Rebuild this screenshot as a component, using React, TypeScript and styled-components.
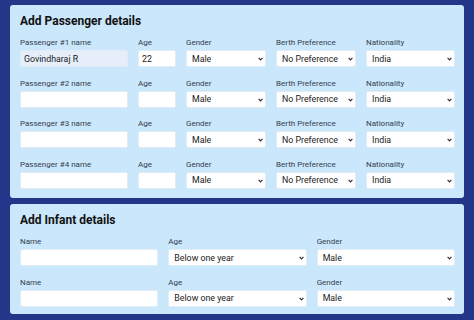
import React from "react";
import styled, { createGlobalStyle } from "styled-components";

const Global = createGlobalStyle`
  html, body { margin: 0; padding: 0; }
  body {
    background: #22368a;
    font-family: Roboto, "Liberation Sans", Arial, sans-serif;
    width: 474px;
    height: 320px;
    overflow: hidden;
  }
  * { box-sizing: border-box; }
`;

const Page = styled.div`
  display: flex;
  flex-direction: column;
  gap: 6.5px;
  padding: 5px 10px 0 10px;
`;

const Card = styled.section<{ $pb: number }>`
  background: #cbe7fb;
  border-radius: 3px;
  padding: 8px 9px ${(p) => p.$pb}px 10px;
  display: flex;
  flex-direction: column;
  gap: 8px;
`;

const Title = styled.h2`
  margin: 0;
  font-size: 12px;
  line-height: 16px;
  font-weight: 700;
  color: #111;
`;

const Rows = styled.div`
  display: flex;
  flex-direction: column;
  gap: 10.5px;
`;

const PassengerRow = styled.div`
  display: grid;
  grid-template-columns: 108px 38px 80px 80px 1fr;
  column-gap: 10px;
`;

const InfantRow = styled.div`
  display: grid;
  grid-template-columns: 1fr 1fr 1fr;
  column-gap: 10px;
`;

const Field = styled.label`
  display: flex;
  flex-direction: column;
  gap: 1px;
  min-width: 0;
`;

const Label = styled.span`
  font-size: 8px;
  line-height: 12px;
  color: #34404e;
  white-space: nowrap;
`;

const TextInput = styled.input<{ $filled?: boolean }>`
  display: block;
  margin: 0;
  height: 17px;
  width: 100%;
  border: 1px solid #e2ecf4;
  border-radius: 2px;
  background: ${(p) => (p.$filled ? "#e6eefa" : "#ffffff")};
  font-family: inherit;
  font-size: 8.8px;
  color: #222;
  padding: 0 3px;
  outline: none;
`;

const SelectWrap = styled.div`
  position: relative;
  height: 17px;
`;

const Select = styled.select`
  display: block;
  margin: 0;
  appearance: none;
  -webkit-appearance: none;
  width: 100%;
  height: 17px;
  border: 1px solid #e2ecf4;
  border-radius: 2px;
  background: #fff;
  font-family: inherit;
  font-size: 8.8px;
  color: #222;
  padding: 0 12px 0 5px;
  outline: none;
`;

const Chevron = styled.svg`
  position: absolute;
  right: 3px;
  top: 7px;
  width: 5px;
  height: 4px;
  pointer-events: none;
`;

const Dropdown: React.FC<{ value: string; options: string[] }> = ({ value, options }) => (
  <SelectWrap>
    <Select defaultValue={value}>
      {options.map((o) => (
        <option key={o}>{o}</option>
      ))}
    </Select>
    <Chevron viewBox="0 0 5 4">
      <path d="M0.6 0.8 L2.5 2.9 L4.4 0.8" fill="none" stroke="#333" strokeWidth="1.2" />
    </Chevron>
  </SelectWrap>
);

const passengers = [
  { name: "Govindharaj R", age: "22" },
  { name: "", age: "" },
  { name: "", age: "" },
  { name: "", age: "" },
];

export default function App() {
  return (
    <>
      <Global />
      <Page>
        <Card $pb={9}>
          <Title>Add Passenger details</Title>
          <Rows>
            {passengers.map((p, i) => (
              <PassengerRow key={i}>
                <Field>
                  <Label>Passenger #{i + 1} name</Label>
                  <TextInput defaultValue={p.name} $filled={!!p.name} />
                </Field>
                <Field>
                  <Label>Age</Label>
                  <TextInput defaultValue={p.age} />
                </Field>
                <Field>
                  <Label>Gender</Label>
                  <Dropdown value="Male" options={["Male", "Female", "Transgender"]} />
                </Field>
                <Field>
                  <Label>Berth Preference</Label>
                  <Dropdown value="No Preference" options={["No Preference", "Lower", "Middle", "Upper", "Side Lower", "Side Upper"]} />
                </Field>
                <Field>
                  <Label>Nationality</Label>
                  <Dropdown value="India" options={["India", "Other"]} />
                </Field>
              </PassengerRow>
            ))}
          </Rows>
        </Card>
        <Card $pb={7}>
          <Title>Add Infant details</Title>
          <Rows>
            {[0, 1].map((i) => (
              <InfantRow key={i}>
                <Field>
                  <Label>Name</Label>
                  <TextInput defaultValue="" />
                </Field>
                <Field>
                  <Label>Age</Label>
                  <Dropdown value="Below one year" options={["Below one year", "One year", "Two years", "Three years", "Four years"]} />
                </Field>
                <Field>
                  <Label>Gender</Label>
                  <Dropdown value="Male" options={["Male", "Female"]} />
                </Field>
              </InfantRow>
            ))}
          </Rows>
        </Card>
      </Page>
    </>
  );
}
